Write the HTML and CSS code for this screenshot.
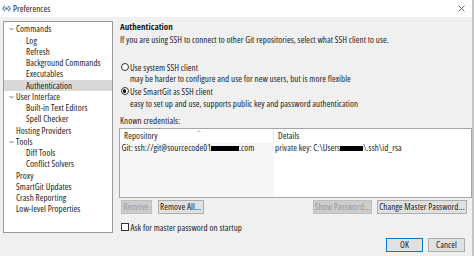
FILE: index.html
```html
<!DOCTYPE html>
<html lang="en">
<head>
  <meta charset="UTF-8">
  <meta name="viewport" content="width=device-width, initial-scale=1.0">
  <title>Preferences</title>
  <link rel="stylesheet" href="styles.css">
</head>
<body>
  <div class="window">
    <div class="titlebar">
      <svg class="appIcon" width="9" height="7" viewBox="0 0 9 7">
        <path d="M3 0.8 L0.8 3.5 L3 6.2 M6 0.8 L8.2 3.5 L6 6.2" fill="none" stroke="#3b7fc4" stroke-width="1.1"/>
        <circle cx="4.5" cy="3.5" r="1.3" fill="#6b6b6b"/>
      </svg>
      <span class="title">Preferences</span>
      <svg class="close" width="7" height="7" viewBox="0 0 7 7">
        <path d="M0.5 0.5 L6.5 6.5 M6.5 0.5 L0.5 6.5" stroke="#444" stroke-width="0.8"/>
      </svg>
    </div>

    <div class="main">
      <div class="tree">
        <div class="node"><svg class="chevron" width="5" height="4" viewBox="0 0 5 4"><path d="M0.5 1 L2.5 3 L4.5 1" fill="none" stroke="#555" stroke-width="0.8"/></svg>Commands</div>
        <div class="node child">Log</div>
        <div class="node child">Refresh</div>
        <div class="node child">Background Commands</div>
        <div class="node child">Executables</div>
        <div class="node child selected">Authentication</div>
        <div class="node"><svg class="chevron" width="5" height="4" viewBox="0 0 5 4"><path d="M0.5 1 L2.5 3 L4.5 1" fill="none" stroke="#555" stroke-width="0.8"/></svg>User Interface</div>
        <div class="node child">Built-in Text Editors</div>
        <div class="node child">Spell Checker</div>
        <div class="node leaf">Hosting Providers</div>
        <div class="node"><svg class="chevron" width="5" height="4" viewBox="0 0 5 4"><path d="M0.5 1 L2.5 3 L4.5 1" fill="none" stroke="#555" stroke-width="0.8"/></svg>Tools</div>
        <div class="node child">Diff Tools</div>
        <div class="node child">Conflict Solvers</div>
        <div class="node leaf">Proxy</div>
        <div class="node leaf">SmartGit Updates</div>
        <div class="node leaf">Crash Reporting</div>
        <div class="node leaf">Low-level Properties</div>
      </div>

      <div class="content">
        <p class="heading">Authentication</p>
        <p class="intro">If you are using SSH to connect to other Git repositories, select what SSH client to use.</p>

        <label class="option"><span class="radio"></span>Use system SSH client</label>
        <p class="hint">may be harder to configure and use for new users, but is more flexible</p>
        <label class="option"><span class="radio checked"></span>Use SmartGit as SSH client</label>
        <p class="hint second">easy to set up and use, supports public key and password authentication</p>

        <p class="known">Known credentials:</p>
        <div class="table">
          <div class="head repo">Repository<span class="sortMark"></span></div>
          <div class="head details">Details</div>
          <div class="cell repo">Git: ssh://git@sourcecode01<span class="redact wide"></span>.com</div>
          <div class="cell details">private key: C:\Users<span class="redact"></span>\.ssh\id_rsa</div>
          <div class="filler repo"></div>
          <div class="filler details"></div>
        </div>

        <div class="buttons">
          <button class="btn disabled removeBtn">Remove</button>
          <button class="btn removeAllBtn">Remove All...</button>
          <button class="btn disabled showBtn">Show Password...</button>
          <button class="btn changeBtn">Change Master Password...</button>
        </div>

        <label class="check"><span class="box"></span>Ask for master password on startup</label>
      </div>
    </div>

    <div class="footer">
      <button class="btn default dialogBtn">OK</button>
      <button class="btn dialogBtn">Cancel</button>
    </div>
  </div>
</body>
</html>
```

FILE: styles.css
```css
body, html {
  margin: 0;
  height: 100%;
  background-color: #f0f0f0;
}
.window {
  width: 474px;
  height: 256px;
  box-sizing: border-box;
  border-right: 2px solid #c6c6c6;
  overflow: hidden;
  font-family: "Open Sans", sans-serif;
  font-stretch: condensed;
  font-size: 9px;
  letter-spacing: 0.06px;
  color: #1b1b1b;
}
p {
  margin: 0;
}

/* title bar */
.titlebar {
  height: 17px;
  background-color: #ffffff;
  display: flex;
  align-items: center;
  padding-left: 2px;
}
.appIcon {
  margin-right: 2px;
}
.title {
  color: #222;
}
.close {
  margin-left: auto;
  margin-right: 7px;
}

/* tree + page */
.main {
  height: 216px;
  box-sizing: border-box;
  padding: 4px 0 0 3px;
  display: flex;
}
.tree {
  width: 110px;
  box-sizing: border-box;
  border: 1px solid #9a9a9a;
  background-color: #ffffff;
  padding-top: 1.4px;
}
.node {
  height: 11.25px;
  line-height: 11.25px;
  padding-left: 5px;
  white-space: nowrap;
  display: flex;
  align-items: center;
}
.chevron {
  margin-right: 2px;
}
.node.leaf {
  padding-left: 12px;
}
.node.child {
  padding-left: 22px;
}
.node.selected {
  background-color: #d9d9d9;
}
.content {
  flex: 1;
  margin-left: 6px;
  display: flex;
  flex-direction: column;
  min-width: 0;
}
.heading {
  font-weight: bold;
  line-height: 12px;
  padding-left: 1px;
}
.intro {
  line-height: 12px;
  margin-top: 1px;
  padding-left: 1px;
  white-space: nowrap;
}
.option {
  display: flex;
  align-items: center;
  height: 12px;
  padding-left: 1.5px;
}
.option:first-of-type {
  margin-top: 15px;
}
.radio {
  width: 6px;
  height: 6px;
  border: 0.8px solid #333;
  border-radius: 50%;
  background-color: #fff;
  margin-right: 1.5px;
  position: relative;
}
.radio.checked::after {
  content: "";
  position: absolute;
  left: 1.2px;
  top: 1.2px;
  width: 3.6px;
  height: 3.6px;
  border-radius: 50%;
  background-color: #111;
}
.hint {
  line-height: 12px;
  padding-left: 11px;
  white-space: nowrap;
}
.hint.second {
  margin-top: 1px;
}
.known {
  line-height: 12px;
  margin-top: 5px;
  padding-left: 1px;
}

/* credentials table */
.table {
  margin-top: 1px;
  height: 72px;
  box-sizing: border-box;
  border: 1px solid #a5a5a5;
  background-color: #ffffff;
  display: grid;
  grid-template-columns: 154px 1fr;
  grid-template-rows: 13px 12px 1fr;
}
.head {
  line-height: 13px;
  padding-left: 4px;
  position: relative;
  white-space: nowrap;
}
.head.repo {
  border-right: 1px solid #e5e5e5;
}
.sortMark {
  position: absolute;
  left: 77px;
  top: 1px;
  width: 0;
  height: 0;
  border-left: 2.5px solid transparent;
  border-right: 2.5px solid transparent;
  border-bottom: 2.5px solid #c8c8c8;
}
.cell {
  line-height: 12px;
  padding-left: 1.5px;
  white-space: nowrap;
  overflow: hidden;
}
.cell.details {
  padding-left: 1px;
}
.cell.repo, .filler.repo {
  background-color: #f7f7f7;
}
.redact {
  display: inline-block;
  width: 23px;
  height: 5px;
  background-color: #000;
  vertical-align: 0;
}
.redact.wide {
  width: 28px;
}

/* buttons */
.btn {
  height: 14px;
  box-sizing: border-box;
  border: 1px solid #adadad;
  background-color: #e1e1e1;
  font-family: inherit;
  font-stretch: inherit;
  font-size: 9px;
  letter-spacing: inherit;
  line-height: 12px;
  color: #1b1b1b;
  padding: 0;
  white-space: nowrap;
}
.btn.disabled {
  background-color: #cccccc;
  border-color: #bfbfbf;
  color: #9a9a9a;
}
.btn.default {
  border-color: #0078d7;
}
.buttons {
  display: flex;
  margin-top: 2px;
  padding: 0 5px 0 1.5px;
}
.removeBtn {
  width: 31px;
}
.removeAllBtn {
  width: 46px;
  margin-left: 6px;
}
.showBtn {
  width: 59px;
  margin-left: auto;
}
.changeBtn {
  width: 90px;
  margin-left: 5px;
}
.check {
  display: flex;
  align-items: center;
  height: 12px;
  margin-top: 7px;
  padding-left: 1.5px;
}
.box {
  width: 6px;
  height: 6px;
  border: 0.8px solid #333;
  background-color: #fff;
  margin-right: 2px;
}

/* dialog buttons */
.footer {
  display: flex;
  justify-content: flex-end;
  gap: 5px;
  padding: 5px 7px 0 0;
}
.dialogBtn {
  width: 37px;
}
```
